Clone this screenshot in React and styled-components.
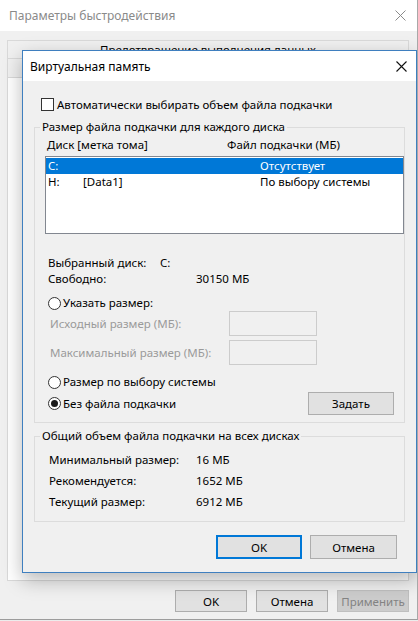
import React from 'react';
import styled, { createGlobalStyle } from 'styled-components';

const GlobalStyle = createGlobalStyle`
  html, body {
    margin: 0;
    padding: 0;
    background: #ececec;
  }
  body {
    font-family: "Noto Sans", "Segoe UI", sans-serif;
    font-size: 11.5px;
    color: #000;
  }
`;

// окно "Параметры быстродействия" (на заднем плане)
const Window = styled.div`
  position: relative;
  width: 418px;
  height: 620px;
  box-sizing: border-box;
  background: #f0f0f0;
  border-right: 1px solid #a8a8a8;
  border-bottom: 1px solid #9c9c9c;
  display: flex;
  flex-direction: column;
  overflow: hidden;
`;

const TitleBar = styled.div`
  height: ${({ h }) => h}px;
  flex: none;
  background: #fff;
  display: flex;
  align-items: center;
  justify-content: space-between;
  padding-left: ${({ pl }) => pl}px;
  font-size: 12px;
  color: ${({ inactive }) => (inactive ? '#8a8a8a' : '#000')};
`;

const CloseBox = styled.div`
  width: ${({ w }) => w}px;
  height: 100%;
  display: flex;
  align-items: center;
  justify-content: center;
`;

const WindowBody = styled.div`
  flex: 1;
  display: flex;
  flex-direction: column;
  padding: 9px 8px 0 7px;
`;

const TabTop = styled.div`
  height: 18px;
  box-sizing: border-box;
  border: 1px solid #d9d9d9;
  border-bottom: none;
  text-align: center;
  line-height: 18px;
`;

const TabRow = styled.div`
  display: flex;
  height: 19px;
`;

const Tab = styled.div`
  flex: 1;
  box-sizing: border-box;
  border: 1px solid #d9d9d9;
  border-bottom: none;
  background: ${({ active }) => (active ? '#fff' : '#f0f0f0')};
  text-align: center;
  line-height: 18px;
`;

const TabPanel = styled.div`
  height: 504px;
  box-sizing: border-box;
  background: #fff;
  border: 1px solid #d9d9d9;
`;

const Footer = styled.div`
  display: flex;
  justify-content: flex-end;
  gap: 9px;
  padding-top: 9px;
`;

const Button = styled.button`
  width: ${({ w }) => w}px;
  height: ${({ h }) => h}px;
  box-sizing: border-box;
  padding: 0;
  font-family: inherit;
  font-size: 11.5px;
  color: ${({ disabled }) => (disabled ? '#838383' : '#000')};
  background: ${({ disabled }) => (disabled ? '#cccccc' : '#e1e1e1')};
  border: ${({ primary, disabled }) =>
    primary ? '2px solid #0078d7' : disabled ? '1px solid #bfbfbf' : '1px solid #adadad'};
  outline: none;
`;

// диалог "Виртуальная память"
const Dialog = styled.div`
  position: absolute;
  left: 22px;
  top: 50px;
  width: 395px;
  box-sizing: border-box;
  background: #f0f0f0;
  border: 1px solid #3f7fbf;
  box-shadow: 0 7px 18px rgba(0, 0, 0, 0.28);
  display: flex;
  flex-direction: column;
`;

const DialogBody = styled.div`
  padding: 17px 11px 13px 11px;
  display: flex;
  flex-direction: column;
`;

const CheckRow = styled.label`
  display: flex;
  align-items: center;
  gap: 3px;
  height: 13px;
  padding-left: 7px;
  line-height: 16px;
`;

const CheckBox = styled.span`
  width: 13px;
  height: 13px;
  box-sizing: border-box;
  border: 1px solid #333;
  background: #fff;
  flex: none;
`;

const Group = styled.fieldset`
  margin: ${({ mt }) => mt}px 0 0 0;
  padding: 0 0 ${({ pb }) => pb}px 10px;
  border: 1px solid #dcdcdc;
  min-width: 0;
`;

const Legend = styled.legend`
  padding: 0 2px;
  margin-left: -5px;
  line-height: 16px;
`;

const ListHeader = styled.div`
  display: grid;
  grid-template-columns: 180px 1fr;
  padding-left: 2px;
  margin-top: 2px;
  line-height: 16px;
`;

const ListBox = styled.div`
  margin-top: 3px;
  height: 78px;
  box-sizing: border-box;
  border: 1px solid #828790;
  background: #fff;
  padding-top: 1px;
`;

const ListRow = styled.div`
  display: grid;
  grid-template-columns: 35px 177px 1fr;
  padding-left: 2px;
  height: 16px;
  line-height: 16px;
  background: ${({ selected }) => (selected ? '#0078d7' : 'transparent')};
  color: ${({ selected }) => (selected ? '#fff' : '#000')};
`;

const InfoRow = styled.div`
  display: flex;
  margin-top: ${({ mt }) => mt || 0}px;
  padding-left: ${({ pl }) => pl}px;
  line-height: ${({ lh }) => lh}px;
`;

const InfoLabel = styled.span`
  width: ${({ w }) => w}px;
  flex: none;
`;

const RadioRow = styled.div`
  display: flex;
  align-items: center;
  justify-content: space-between;
  margin-top: ${({ mt }) => mt}px;
  padding-right: ${({ pr }) => pr || 0}px;
  min-height: 16px;
`;

const RadioLabel = styled.label`
  display: flex;
  align-items: center;
  gap: 2px;
  padding-left: 3px;
  line-height: 16px;
`;

const Radio = styled.span`
  width: 13px;
  height: 13px;
  box-sizing: border-box;
  border-radius: 50%;
  border: 1px solid #333;
  background: #fff;
  flex: none;
  display: flex;
  align-items: center;
  justify-content: center;

  &::after {
    content: '';
    display: ${({ checked }) => (checked ? 'block' : 'none')};
    width: 7px;
    height: 7px;
    border-radius: 50%;
    background: #1a1a1a;
  }
`;

const FieldRow = styled.div`
  display: flex;
  align-items: center;
  margin-top: ${({ mt }) => mt}px;
  padding-left: 5px;
  height: 25px;
  color: #9a9a9a;
`;

const FieldLabel = styled.span`
  width: 179px;
  flex: none;
`;

const TextBox = styled.div`
  width: 88px;
  height: 25px;
  box-sizing: border-box;
  border: 1px solid #cccccc;
  background: #f0f0f0;
`;

const DialogButtons = styled.div`
  display: flex;
  justify-content: flex-end;
  gap: 8px;
  margin-top: 13px;
  padding-right: 8px;
`;

function CloseIcon({ color, stroke }) {
  return (
    <svg width="11" height="11" viewBox="0 0 11 11">
      <path d="M0.5 0.5 L10.5 10.5 M10.5 0.5 L0.5 10.5" stroke={color} strokeWidth={stroke} fill="none" />
    </svg>
  );
}

export default function App() {
  return (
    <>
      <GlobalStyle />
      <Window>
        <TitleBar h={31} pl={9} inactive>
          <span>Параметры быстродействия</span>
          <CloseBox w={34}>
            <CloseIcon color="#8a8a8a" stroke={1} />
          </CloseBox>
        </TitleBar>
        <WindowBody>
          <TabTop>Предотвращение выполнения данных</TabTop>
          <TabRow>
            <Tab>Визуальные эффекты</Tab>
            <Tab active>Дополнительно</Tab>
          </TabRow>
          <TabPanel />
          <Footer>
            <Button w={72} h={22}>OK</Button>
            <Button w={72} h={22}>Отмена</Button>
            <Button w={72} h={22} disabled>Применить</Button>
          </Footer>
        </WindowBody>

        <Dialog>
          <TitleBar h={30} pl={7}>
            <span>Виртуальная память</span>
            <CloseBox w={30}>
              <CloseIcon color="#111" stroke={1.1} />
            </CloseBox>
          </TitleBar>
          <DialogBody>
            <CheckRow>
              <CheckBox />
              <span>Автоматически выбирать объем файла подкачки</span>
            </CheckRow>

            <Group mt={8} pb={7}>
              <Legend>Размер файла подкачки для каждого диска</Legend>
              <ListHeader>
                <span>Диск [метка тома]</span>
                <span>Файл подкачки (МБ)</span>
              </ListHeader>
              <ListBox>
                <ListRow selected>
                  <span>C:</span>
                  <span></span>
                  <span>Отсутствует</span>
                </ListRow>
                <ListRow>
                  <span>H:</span>
                  <span>[Data1]</span>
                  <span>По выбору системы</span>
                </ListRow>
              </ListBox>

              <InfoRow mt={21} pl={3} lh={16}>
                <InfoLabel w={112}>Выбранный диск:</InfoLabel>
                <span>C:</span>
              </InfoRow>
              <InfoRow pl={3} lh={16}>
                <InfoLabel w={148}>Свободно:</InfoLabel>
                <span>30150 МБ</span>
              </InfoRow>

              <RadioRow mt={8}>
                <RadioLabel>
                  <Radio />
                  <span>Указать размер:</span>
                </RadioLabel>
              </RadioRow>
              <FieldRow mt={0}>
                <FieldLabel>Исходный размер (МБ):</FieldLabel>
                <TextBox />
              </FieldRow>
              <FieldRow mt={4}>
                <FieldLabel>Максимальный размер (МБ):</FieldLabel>
                <TextBox />
              </FieldRow>
              <RadioRow mt={9}>
                <RadioLabel>
                  <Radio />
                  <span>Размер по выбору системы</span>
                </RadioLabel>
              </RadioRow>
              <RadioRow mt={2} pr={10}>
                <RadioLabel>
                  <Radio checked />
                  <span>Без файла подкачки</span>
                </RadioLabel>
                <Button w={86} h={23}>Задать</Button>
              </RadioRow>
            </Group>

            <Group mt={5} pb={9}>
              <Legend>Общий объем файла подкачки на всех дисках</Legend>
              <InfoRow mt={5} pl={4} lh={21}>
                <InfoLabel w={147}>Минимальный размер:</InfoLabel>
                <span>16 МБ</span>
              </InfoRow>
              <InfoRow pl={4} lh={21}>
                <InfoLabel w={147}>Рекомендуется:</InfoLabel>
                <span>1652 МБ</span>
              </InfoRow>
              <InfoRow pl={4} lh={21}>
                <InfoLabel w={147}>Текущий размер:</InfoLabel>
                <span>6912 МБ</span>
              </InfoRow>
            </Group>

            <DialogButtons>
              <Button w={86} h={24} primary>OK</Button>
              <Button w={87} h={24}>Отмена</Button>
            </DialogButtons>
          </DialogBody>
        </Dialog>
      </Window>
    </>
  );
}
